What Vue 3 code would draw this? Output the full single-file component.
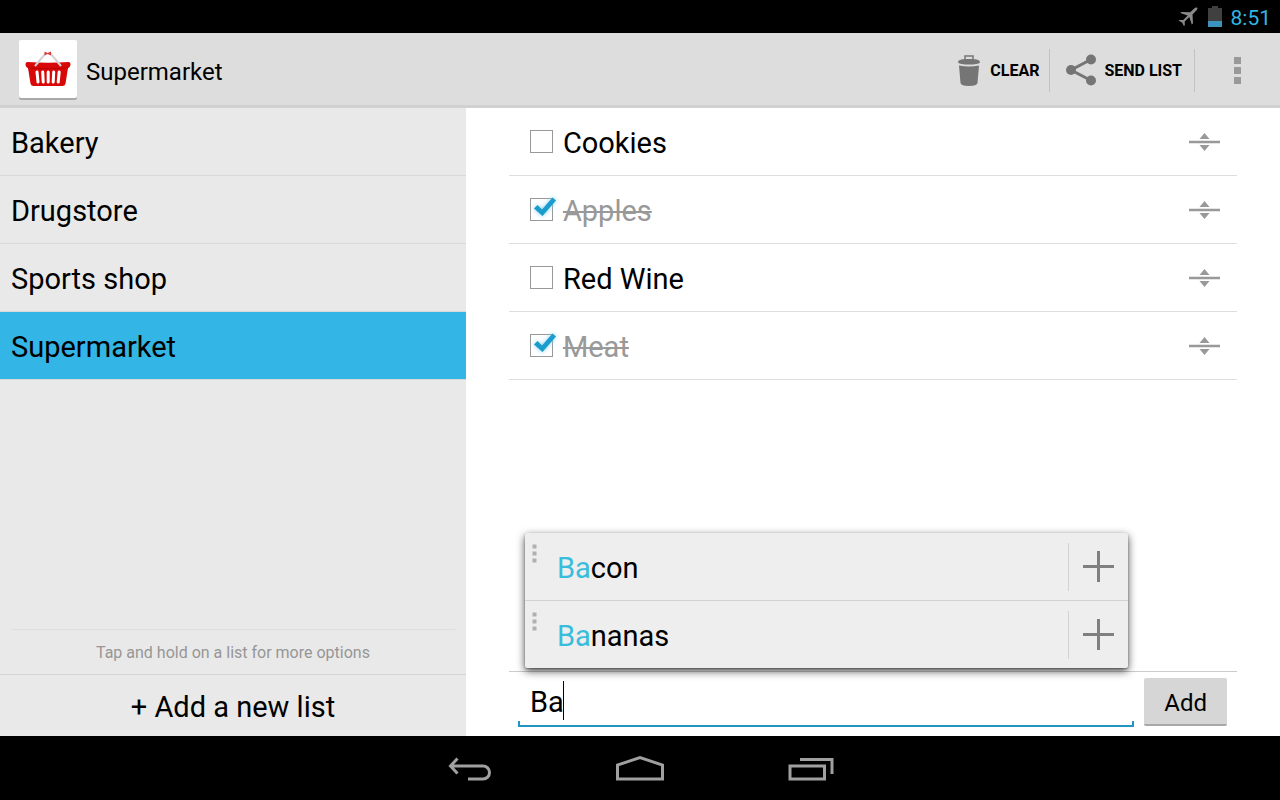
<script setup>
import { computed, ref } from 'vue'

const lists = ref(['Bakery', 'Drugstore', 'Sports shop', 'Supermarket'])
const current = ref('Supermarket')

const items = ref([
  { name: 'Cookies', done: false },
  { name: 'Apples', done: true },
  { name: 'Red Wine', done: false },
  { name: 'Meat', done: true },
])

const known = ['Bacon', 'Bananas']
const query = ref('Ba')

const suggestions = computed(() =>
  query.value
    ? known.filter((name) => name.toLowerCase().startsWith(query.value.toLowerCase()))
    : [],
)

function addItem(name) {
  if (!name) return
  items.value.push({ name, done: false })
  query.value = ''
}

function clearDone() {
  items.value = items.value.filter((item) => !item.done)
}
</script>

<template>
  <div class="screen">
    <div class="status-bar">
      <svg class="plane" viewBox="0 0 20 20" width="20" height="20" aria-hidden="true">
        <path
          d="M19.200.8c-.9-.7-2-.2-3 .8l-4 3.700-8.700-.4-1.200 1.200 7.400 2.300-4.500 4.700-3.700-.2-.9.900 3.500 1.700 1.800 3.600.9-.9-.1-3.700 4.600-4.400 2.500 7.300 1.200-1.200-.5-8.700 3.800-4c1-1 1.500-2 .9-2.700z"
        />
      </svg>
      <svg class="battery" viewBox="0 0 14 21" width="14" height="21" aria-hidden="true">
        <path d="M4 0h6v2h4v13H0V2h4z" fill="#404040" />
        <path d="M0 15h14v6H0z" fill="#3a94bd" />
      </svg>
      <span class="clock">8:51</span>
    </div>

    <header class="action-bar">
      <svg class="logo" viewBox="0 0 58 60" width="58" height="60" aria-hidden="true">
        <rect x="0" y="2" width="58" height="58" rx="2" fill="#a9a9a9" />
        <rect x="0" y="0" width="58" height="58" rx="2" fill="#fff" />
        <path
          d="M6.500 24q0-2 2-2 20.500 1.500 41 0 2 0 2 2 0 3.500-2.500 4l-2.500 15.500q-.5 2.500-3 2.500h-29q-2.500 0-3-2.500L9 28q-2.500-.5-2.500-4z"
          fill="#d90808"
        />
        <path d="M9 28q20 1.500 40 0" stroke="#b80000" fill="none" />
        <path d="M16 26 27 13M42 26 31 13" stroke="#d6d2d2" stroke-width="2" fill="none" />
        <path d="M25.500 11.500l3 1.500 3.500-1.500v4l-3.500-1.500-3 1.500z" fill="#dc3a3a" />
        <path
          d="M18 32l1 10M23.700 32l.5 10M29.200 32v10M34.700 32l-.5 10M40.200 32l-1 10"
          stroke="#fff"
          stroke-width="3"
          stroke-linecap="round"
        />
      </svg>
      <h1 class="title">{{ current }}</h1>

      <button class="action clear" @click="clearDone">
        <svg viewBox="0 0 22 32" width="22" height="32" aria-hidden="true">
          <path d="M7 6V2h8v4" fill="none" stroke="#757575" stroke-width="1.500" />
          <path d="M0 8.500C0 5.500 4 5 11 5s11 .5 11 3.500q-2 2-11 2t-11-2z" fill="#757575" />
          <path d="M1 11.500q10 1.800 20 0L19.500 29q-.5 3-8.500 3t-8.500-3z" fill="#757575" />
        </svg>
        <span>CLEAR</span>
      </button>
      <button class="action send">
        <svg viewBox="0 0 30 32" width="30" height="32" aria-hidden="true">
          <path d="M25 5.500 5 16l20 10.500" fill="none" stroke="#757575" stroke-width="3" />
          <circle cx="5" cy="16" r="5" fill="#757575" />
          <circle cx="25" cy="5.500" r="5" fill="#757575" />
          <circle cx="25" cy="26.500" r="5" fill="#757575" />
        </svg>
        <span>SEND LIST</span>
      </button>
      <button class="more" aria-label="More options">
        <svg viewBox="0 0 7 27" width="7" height="27" aria-hidden="true">
          <path d="M0 0h7v7H0zM0 10h7v7H0zM0 20h7v7H0z" fill="#999" />
        </svg>
      </button>
    </header>

    <main class="panes">
      <nav class="sidebar">
        <button
          v-for="list in lists"
          :key="list"
          class="list"
          :class="{ active: list === current }"
          @click="current = list"
        >
          {{ list }}
        </button>
        <p class="hint">Tap and hold on a list for more options</p>
        <button class="new-list">+ Add a new list</button>
      </nav>

      <section class="detail">
        <ul class="items">
          <li v-for="item in items" :key="item.name" class="item" :class="{ done: item.done }">
            <label class="item-label">
              <span class="box">
                <input v-model="item.done" type="checkbox" />
                <svg v-if="item.done" class="tick" viewBox="-2 -4 32 26" width="32" height="26" aria-hidden="true">
                  <path d="M3 10.500 6.500 7l4.500 4.500L21.500-.5 25 2.500 11.500 18z" />
                </svg>
              </span>
              <span class="item-name">{{ item.name }}</span>
            </label>
            <svg class="handle" viewBox="0 0 31 20" width="31" height="20" aria-hidden="true">
              <path d="M10.500 7 15.500 1l5 6zM10.500 13l5 6 5-6zM0 8.700h31v2.600H0z" />
            </svg>
          </li>
        </ul>

        <form class="add-form" @submit.prevent="addItem(query)">
          <ul v-if="suggestions.length" class="suggestions">
            <li v-for="name in suggestions" :key="name" class="suggestion">
              <svg class="grip" viewBox="0 0 5 19" width="5" height="19" aria-hidden="true">
                <path d="M.5.500h4v4h-4zM.5 7.500h4v4h-4zM.5 14.500h4v4h-4z" />
              </svg>
              <span class="suggestion-name"
                ><b>{{ name.slice(0, query.length) }}</b
                >{{ name.slice(query.length) }}</span
              >
              <button type="button" class="plus" :aria-label="'Add ' + name" @click="addItem(name)">
                <svg viewBox="0 0 31 31" width="31" height="31" aria-hidden="true">
                  <path d="M15.500 0v31M0 15.500h31" />
                </svg>
              </button>
            </li>
          </ul>
          <div class="field">
            <input v-model="query" type="text" aria-label="New item" />
            <span class="caret" :data-value="query" aria-hidden="true"></span>
          </div>
          <button class="add">Add</button>
        </form>
      </section>
    </main>

    <footer class="nav-bar">
      <button aria-label="Back">
        <svg viewBox="0 0 48 26" width="48" height="26" aria-hidden="true">
          <path d="M12.500 3.500 5.500 11l7 7.500M5.500 11h32.500a6.500 6.500 0 0 1 0 13H23" />
        </svg>
      </button>
      <button aria-label="Home">
        <svg viewBox="0 0 48 26" width="48" height="26" aria-hidden="true">
          <path d="M1.500 24V10L24 2.500l22.500 7.500v14z" />
        </svg>
      </button>
      <button aria-label="Recent apps">
        <svg viewBox="0 0 48 26" width="48" height="26" aria-hidden="true">
          <path d="M3 11h34.500v13H3zM13 4.500h32v14.500" />
        </svg>
      </button>
    </footer>
  </div>
</template>

<style>
body {
  margin: 0;
}
</style>

<style scoped>
.screen {
  display: flex;
  flex-direction: column;
  min-height: 100vh;
  background: #fff;
  color: #000;
  font-family: Roboto, 'Liberation Sans', sans-serif;
}

button {
  border: 0;
  padding: 0;
  background: none;
  color: inherit;
  font: inherit;
  cursor: pointer;
}

svg {
  display: block;
  flex: none;
}

ul {
  margin: 0;
  padding: 0;
  list-style: none;
}

.status-bar {
  display: flex;
  align-items: center;
  justify-content: flex-end;
  height: 33px;
  padding-right: 9px;
  background: #000;
}

.plane {
  margin-right: 10px;
  fill: #8a8a8a;
}

.battery {
  margin-right: 9px;
}

.clock {
  padding-top: 2px;
  color: #33b5e5;
  font-size: 21px;
  line-height: 24px;
}

.action-bar {
  display: flex;
  align-items: center;
  height: 70px;
  padding: 2px 0 0 19px;
  border-bottom: 3px solid #d0d0d0;
  background: #ddd;
}

.title {
  flex: 1;
  margin: 0 0 0 9px;
  padding-top: 4px;
  font-size: 24px;
  font-weight: 400;
  line-height: 28px;
}

.action {
  display: flex;
  align-items: center;
  height: 43px;
  border-right: 1px solid #c2c2c2;
  font-size: 16px;
  font-weight: 700;
}

.clear {
  gap: 10px;
  padding-right: 10px;
}

.send {
  gap: 8px;
  padding: 0 12px 0 16px;
}

.more {
  display: flex;
  align-items: center;
  justify-content: center;
  width: 85px;
  height: 43px;
}

.panes {
  flex: 1;
  display: flex;
}

.sidebar {
  display: flex;
  flex-direction: column;
  width: 36.4%;
  background: #e9e9e9;
}

.list {
  height: 68px;
  padding: 3px 11px 0;
  border-bottom: 1px solid #d8d8d8;
  font-size: 29px;
  text-align: left;
}

.list.active {
  background: #33b5e5;
}

.hint {
  margin: auto 11px 0;
  padding-top: 2px;
  border-top: 1px solid #dedede;
  color: #969696;
  font-size: 16px;
  line-height: 42px;
  text-align: center;
}

.new-list {
  height: 62px;
  padding-top: 3px;
  border-top: 1px solid #d4d4d4;
  font-size: 29px;
}

.detail {
  flex: 1;
  display: flex;
  flex-direction: column;
  padding: 0 43px;
}

.items {
  flex: 1;
}

.item {
  display: flex;
  align-items: center;
  box-sizing: border-box;
  height: 68px;
  padding-right: 17px;
  border-bottom: 1px solid #dedede;
}

.item-label {
  flex: 1;
  display: flex;
  align-items: center;
  padding-left: 21px;
}

.box {
  position: relative;
  display: flex;
}

.box input {
  appearance: none;
  width: 23px;
  height: 23px;
  margin: 0;
  border: 1px solid #999;
}

.tick {
  position: absolute;
  top: -4px;
  left: -1px;
  fill: #1b9ccd;
  filter: drop-shadow(0 0 2px #7fd0f0);
  pointer-events: none;
}

.item-name {
  padding: 3px 0 0 10px;
  font-size: 29px;
  line-height: 34px;
}

.done .item-name {
  color: #999;
  text-decoration: line-through;
  text-decoration-thickness: 2px;
}

.handle {
  fill: #999;
}

.add-form {
  position: relative;
  display: flex;
  align-items: flex-start;
  gap: 10px;
  box-sizing: border-box;
  height: 65px;
  padding: 6px 10px 0 9px;
  border-top: 1px solid #ccc;
}

.suggestions {
  position: absolute;
  right: 109px;
  bottom: 68px;
  left: 16px;
  border-radius: 2px;
  background: #eee;
  box-shadow: 0 3px 8px rgba(0, 0, 0, 0.7), 0 1px 2px rgba(0, 0, 0, 0.3);
}

.suggestion {
  display: flex;
  align-items: center;
  height: 67px;
}

.suggestion + .suggestion {
  border-top: 1px solid #d2d2d2;
}

.grip {
  align-self: flex-start;
  margin: 11px 20px 0 7px;
  fill: #b0b0b0;
}

.suggestion-name {
  flex: 1;
  padding-top: 3px;
  font-size: 29px;
  line-height: 34px;
}

.suggestion-name b {
  color: #38bddd;
  font-weight: 400;
}

.plus {
  display: flex;
  align-items: center;
  justify-content: center;
  width: 60px;
  height: 48px;
  border-left: 1px solid #d2d2d2;
}

.plus path {
  stroke: #808080;
  stroke-width: 3;
}

.field {
  position: relative;
  flex: 1;
  height: 49px;
}

/* bracket-shaped underline */
.field::after {
  content: '';
  position: absolute;
  right: 0;
  bottom: 0;
  left: 0;
  height: 4px;
  border: solid #2196c4;
  border-width: 0 2px 2px;
  pointer-events: none;
}

.field input {
  box-sizing: border-box;
  width: 100%;
  height: 48px;
  padding: 0 12px;
  border: 0;
  outline: none;
  background: none;
  color: #000;
  caret-color: transparent;
  font: 29px Roboto, 'Liberation Sans', sans-serif;
}

.caret {
  position: absolute;
  top: 3px;
  left: 11px;
  height: 39px;
  border-right: 1px solid #000;
  font-size: 29px;
  pointer-events: none;
}

.caret::before {
  content: attr(data-value);
  visibility: hidden;
}

.add {
  height: 48px;
  padding: 3px 20px 0;
  border-bottom: 2px solid #a8a8a8;
  border-radius: 2px;
  background: #d6d6d6;
  font-size: 24px;
}

.nav-bar {
  display: flex;
  justify-content: center;
  height: 64px;
  background: #000;
}

.nav-bar button {
  display: flex;
  align-items: center;
  justify-content: center;
  width: 171px;
}

.nav-bar path {
  fill: none;
  stroke: #a0a0a0;
  stroke-width: 3;
}
</style>
